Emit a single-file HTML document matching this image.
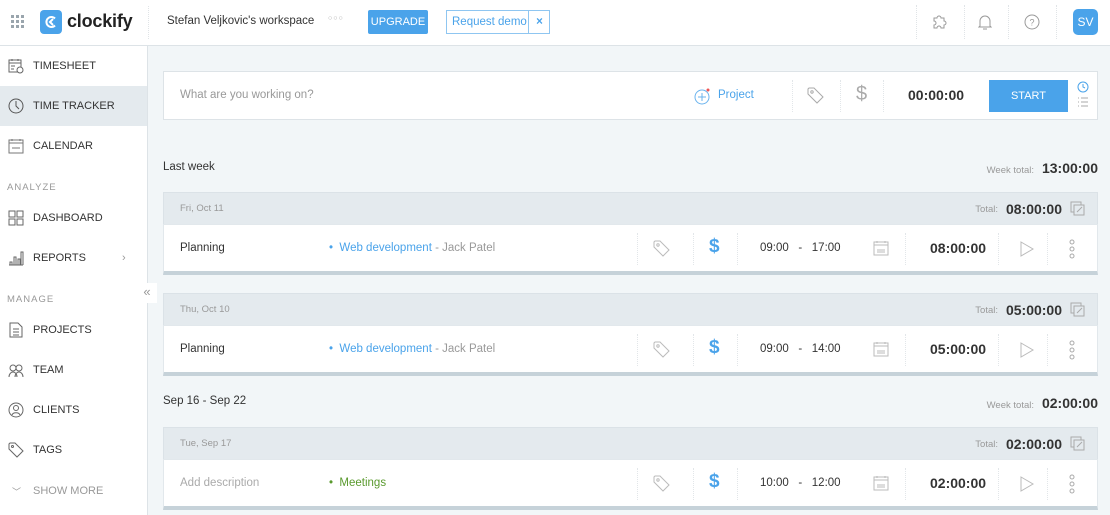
<!DOCTYPE html>
<html><head><meta charset="utf-8"><style>
*{box-sizing:border-box;margin:0;padding:0}
body{width:1110px;height:515px;overflow:hidden;font-family:"Liberation Sans",sans-serif;background:#f2f6f8;position:relative;color:#333}
.abs{position:absolute}
.top{left:0;top:0;width:1110px;height:46px;background:#fff;border-bottom:1px solid #dde3e7}
.side{left:0;top:46px;width:148px;height:469px;background:#fff;border-right:1px solid #dde3e7}
.ni{position:absolute;left:0;width:147px;height:40px;display:flex;align-items:center;font-size:11px;color:#333}
.ni svg{margin-left:8px;margin-right:9px}
.sec{position:absolute;left:7px;font-size:9.5px;color:#999;letter-spacing:1px}
.vs{position:absolute;top:0;width:0;border-left:1px dotted #e2e6e9}
.card{position:absolute;left:163px;width:935px;background:#fff}
.gh{position:absolute;left:163px;width:935px;height:33px;background:#e4eaee;border:1px solid #dbe2e7;border-bottom:none}
.row{position:absolute;left:163px;width:935px;height:51px;background:#fff;border:1px solid #e2e8ec;border-bottom:4px solid #c6d2d9}
.t{position:absolute;white-space:nowrap}
.tot{position:absolute;right:35px;top:8px;white-space:nowrap;font-size:14px;font-weight:bold}
.tl{position:absolute;right:99px;top:11px;font-size:9.5px;color:#999}
</style></head><body>
<div class="abs top">
 <svg class="abs" style="left:11px;top:15px" width="13" height="13" viewBox="0 0 13 13" fill="#9aa5ad"><g><rect x="0" y="0" width="3" height="3"/><rect x="5" y="0" width="3" height="3"/><rect x="10" y="0" width="3" height="3"/><rect x="0" y="5" width="3" height="3"/><rect x="5" y="5" width="3" height="3"/><rect x="10" y="5" width="3" height="3"/><rect x="0" y="10" width="3" height="3"/><rect x="5" y="10" width="3" height="3"/><rect x="10" y="10" width="3" height="3"/></g></svg>
 <div class="abs" style="left:40px;top:10px;width:22px;height:24px;background:#4aa3ea;border-radius:4px"></div>
 <svg class="abs" style="left:44px;top:14px" width="15" height="16" viewBox="0 0 15 16"><path d="M11 4.5A5 5 0 1 0 11 11.5" stroke="#fff" stroke-width="2" fill="none"/><path d="M9 5L6 8l3 3" stroke="#fff" stroke-width="2" fill="none"/></svg>
 <div class="t" style="left:67px;top:11px;font-size:18px;font-weight:bold;color:#222;letter-spacing:-0.2px">clockify</div>
 <div class="abs" style="left:148px;top:6px;height:33px;border-left:1px dotted #e0e4e7"></div>
 <div class="t" style="left:167px;top:15px;font-size:11.5px;color:#333">Stefan Veljkovic's workspace</div>
 <div class="t" style="left:328px;top:15px;font-size:7px;color:#aaa;letter-spacing:1px">○○○</div>
 <div class="abs" style="left:368px;top:10px;width:60px;height:24px;background:#4aa3ea;border-radius:2px;color:#fff;font-size:11px;text-align:center;line-height:24px">UPGRADE</div>
 <div class="abs" style="left:446px;top:10px;width:104px;height:24px;border:1px solid #8fc6f1;color:#4aa3ea;font-size:11.5px;line-height:22px"><span style="margin-left:5px">Request demo</span><span style="position:absolute;left:81px;top:0;height:22px;border-left:1px solid #8fc6f1;width:22px;text-align:center;font-weight:bold">×</span></div>
 <div class="abs" style="left:916px;top:5px;height:34px;border-left:1px dotted #e0e4e7"></div>
 <div class="abs" style="left:964px;top:5px;height:34px;border-left:1px dotted #e0e4e7"></div>
 <div class="abs" style="left:1008px;top:5px;height:34px;border-left:1px dotted #e0e4e7"></div>
 <div class="abs" style="left:1056px;top:5px;height:34px;border-left:1px dotted #e0e4e7"></div>
 <svg class="abs" style="left:931px;top:14px" width="16" height="16" viewBox="0 0 16 16"><path d="M3 4h3a2 2 0 1 1 4 0h3v3a2 2 0 1 1 0 4v3h-3a2 2 0 1 0-4 0H3v-3a2 2 0 1 0 0-4z" stroke="#999" fill="none"/></svg>
 <svg class="abs" style="left:978px;top:13px" width="14" height="18" viewBox="0 0 14 18"><path d="M2 13V8a5 5 0 0 1 10 0v5l1 1H1zM5 16h4" stroke="#999" fill="none"/></svg>
 <svg class="abs" style="left:1024px;top:14px" width="16" height="16" viewBox="0 0 16 16"><circle cx="8" cy="8" r="7" stroke="#999" fill="none"/><text x="8" y="11.5" font-size="9" text-anchor="middle" fill="#999" font-family="Liberation Sans">?</text></svg>
 <div class="abs" style="left:1073px;top:9px;width:25px;height:26px;background:#4aa3ea;border-radius:5px;color:#fff;font-size:12px;text-align:center;line-height:26px">SV</div>
</div>

<div class="abs side">
 <div class="ni" style="top:0"><svg width="16" height="16" viewBox="0 0 16 16" fill="none" stroke="#666"><rect x="1" y="2" width="12" height="12"/><path d="M1 5h12M4 1v2M10 1v2M3 8h4M3 11h3"/><circle cx="12" cy="12" r="3" fill="#fff"/></svg>TIMESHEET</div>
 <div class="ni" style="top:40px;background:#e4eaee"><svg width="16" height="16" viewBox="0 0 16 16" fill="none" stroke="#555"><circle cx="8" cy="8" r="7"/><path d="M8 3v5l3 3"/></svg>TIME TRACKER</div>
 <div class="ni" style="top:80px"><svg width="16" height="16" viewBox="0 0 16 16" fill="none" stroke="#777"><rect x="1" y="2" width="14" height="13"/><path d="M1 5h14M4 1v2M12 1v2M4 10h8"/></svg>CALENDAR</div>
 <div class="sec" style="top:136px">ANALYZE</div>
 <div class="ni" style="top:152px"><svg width="16" height="16" viewBox="0 0 16 16" fill="none" stroke="#666"><rect x="1" y="1" width="6" height="6"/><rect x="9" y="1" width="6" height="6"/><rect x="1" y="9" width="6" height="6"/><rect x="9" y="9" width="6" height="6"/></svg>DASHBOARD</div>
 <div class="ni" style="top:192px"><svg width="16" height="16" viewBox="0 0 16 16" fill="none" stroke="#666"><path d="M1 15h14M2 15v-3h2v3M6 15V7h2v8M10 15V9h2v6M13 15V2h2v13"/></svg>REPORTS<span style="position:absolute;left:122px;color:#999">›</span></div>
 <div class="sec" style="top:248px">MANAGE</div>
 <div class="abs" style="left:137px;top:237px;width:20px;height:20px;background:#fff;color:#999;font-size:13px;text-align:center;line-height:18px">«</div>
 <div class="ni" style="top:264px"><svg width="16" height="16" viewBox="0 0 16 16" fill="none" stroke="#666"><path d="M2 1h8l4 4v10H2zM5 7h6M5 10h6M5 13h6"/></svg>PROJECTS</div>
 <div class="ni" style="top:304px"><svg width="16" height="16" viewBox="0 0 16 16" fill="none" stroke="#666"><circle cx="5" cy="6" r="3"/><circle cx="11" cy="6" r="3"/><path d="M1 15c0-3 2-5 4-5s4 2 4 5M7 15c0-3 2-5 4-5s4 2 4 5"/></svg>TEAM</div>
 <div class="ni" style="top:344px"><svg width="16" height="16" viewBox="0 0 16 16" fill="none" stroke="#666"><circle cx="8" cy="8" r="7"/><circle cx="8" cy="6" r="2.5"/><path d="M4 13c1-3 7-3 8 0"/></svg>CLIENTS</div>
 <div class="ni" style="top:384px"><svg width="16" height="16" viewBox="0 0 16 16" fill="none" stroke="#666"><path d="M1 2v5l8 8 6-6-8-8H2z"/><circle cx="4.5" cy="4.5" r="1"/></svg>TAGS</div>
 <div class="ni" style="top:425px;color:#999"><span style="margin-left:12px;margin-right:12px;font-size:9px">﹀</span>SHOW MORE</div>
</div>

<div class="card" style="top:71px;height:49px;border:1px solid #dde3e7">
 <div class="t" style="left:16px;top:17px;font-size:11.5px;color:#999">What are you working on?</div>
 <svg class="abs" style="left:530px;top:15px" width="18" height="18" viewBox="0 0 18 18" fill="none" stroke="#6ab3ee"><circle cx="8" cy="10" r="7"/><path d="M8 6v8M4 10h8"/><circle cx="14" cy="3" r="1.5" fill="#e55" stroke="none"/></svg>
 <div class="t" style="left:554px;top:17px;font-size:11.5px;color:#4aa3ea">Project</div>
 <div class="vs" style="left:628px;top:8px;height:32px"></div>
 <svg class="abs" style="left:643px;top:15px" width="18" height="18" viewBox="0 0 18 18" fill="none" stroke="#aaa"><path d="M1 2v5l9 9 6-6-9-9H2z"/><circle cx="5" cy="5" r="1.2"/></svg>
 <div class="vs" style="left:676px;top:8px;height:32px"></div>
 <div class="t" style="left:692px;top:11px;font-size:20px;color:#aaa;font-weight:300">$</div>
 <div class="vs" style="left:719px;top:8px;height:32px"></div>
 <div class="t" style="left:744px;top:15px;font-size:14px;font-weight:bold;color:#333">00:00:00</div>
 <div class="abs" style="left:825px;top:8px;width:79px;height:32px;background:#4aa3ea;color:#fff;font-size:11px;text-align:center;line-height:32px">START</div>
 <svg class="abs" style="left:913px;top:9px" width="12" height="28" viewBox="0 0 12 28" fill="none"><circle cx="6" cy="6" r="5" stroke="#4aa3ea"/><path d="M6 3v3l2 1" stroke="#4aa3ea"/><path d="M1 17h1M4 17h7M1 21h1M4 21h7M1 25h1M4 25h7" stroke="#aaa"/></svg>
</div>

<div class="t" style="left:163px;top:161px;font-size:11.5px;color:#333">Last week</div>
<div class="t" style="right:76px;top:165px;font-size:9.5px;color:#999">Week total:</div>
<div class="t" style="right:12px;top:160px;font-size:14px;font-weight:bold;color:#333">13:00:00</div>

<div class="t" style="left:163px;top:395px;font-size:11.5px;color:#333">Sep 16 - Sep 22</div>
<div class="t" style="right:76px;top:400px;font-size:9.5px;color:#999">Week total:</div>
<div class="t" style="right:12px;top:395px;font-size:14px;font-weight:bold;color:#333">02:00:00</div>

<div class="gh" style="top:192px"><div class="t" style="left:16px;top:10px;font-size:9.5px;color:#999">Fri, Oct 11</div><div class="tl">Total:</div><div class="tot">08:00:00</div><svg class="abs" style="left:906px;top:8px" width="16" height="16" viewBox="0 0 16 16" fill="none" stroke="#aaa"><rect x="1" y="1" width="10" height="10"/><rect x="4" y="4" width="10" height="10" fill="#e4eaee"/><path d="M7 11l5-5"/></svg></div>
<div class="gh" style="top:293px"><div class="t" style="left:16px;top:10px;font-size:9.5px;color:#999">Thu, Oct 10</div><div class="tl">Total:</div><div class="tot">05:00:00</div><svg class="abs" style="left:906px;top:8px" width="16" height="16" viewBox="0 0 16 16" fill="none" stroke="#aaa"><rect x="1" y="1" width="10" height="10"/><rect x="4" y="4" width="10" height="10" fill="#e4eaee"/><path d="M7 11l5-5"/></svg></div>
<div class="gh" style="top:427px"><div class="t" style="left:16px;top:10px;font-size:9.5px;color:#999">Tue, Sep 17</div><div class="tl">Total:</div><div class="tot">02:00:00</div><svg class="abs" style="left:906px;top:8px" width="16" height="16" viewBox="0 0 16 16" fill="none" stroke="#aaa"><rect x="1" y="1" width="10" height="10"/><rect x="4" y="4" width="10" height="10" fill="#e4eaee"/><path d="M7 11l5-5"/></svg></div>

<div class="row" style="top:224px">
 <div class="t" style="left:16px;top:17px;font-size:11.5px">Planning</div>
 <div class="t" style="left:165px;top:17px;font-size:11.5px;color:#4aa3ea">•&nbsp; Web development <span style="color:#999">- Jack Patel</span></div>
 <div class="vs" style="left:473px;top:8px;height:32px"></div>
 <svg class="abs" style="left:489px;top:15px" width="18" height="18" viewBox="0 0 18 18" fill="none" stroke="#bbb"><path d="M1 2v5l9 9 6-6-9-9H2z"/><circle cx="5" cy="5" r="1.2"/></svg>
 <div class="vs" style="left:529px;top:8px;height:32px"></div>
 <div class="t" style="left:545px;top:11px;font-size:19px;color:#4aa3ea;font-weight:bold">$</div>
 <div class="vs" style="left:573px;top:8px;height:32px"></div>
 <div class="t" style="left:596px;top:17px;font-size:11.5px">09:00 &nbsp;&nbsp;- &nbsp;&nbsp;17:00</div>
 <svg class="abs" style="left:709px;top:15px" width="16" height="16" viewBox="0 0 16 16" fill="none" stroke="#bbb"><rect x="1" y="2" width="14" height="13"/><path d="M1 5h14M4 1v2M12 1v2M4 10h8M4 12h8"/></svg>
 <div class="vs" style="left:741px;top:8px;height:32px"></div>
 <div class="t" style="left:766px;top:15px;font-size:14px;font-weight:bold">08:00:00</div>
 <div class="vs" style="left:834px;top:8px;height:32px"></div>
 <svg class="abs" style="left:856px;top:16px" width="14" height="16" viewBox="0 0 14 16" fill="none" stroke="#bbb"><path d="M1 1l12 7-12 7z"/></svg>
 <div class="vs" style="left:883px;top:8px;height:32px"></div>
 <svg class="abs" style="left:905px;top:14px" width="6" height="20" viewBox="0 0 6 20" fill="none" stroke="#aaa"><circle cx="3" cy="3" r="2"/><circle cx="3" cy="10" r="2"/><circle cx="3" cy="17" r="2"/></svg>
</div>
<div class="row" style="top:325px">
 <div class="t" style="left:16px;top:17px;font-size:11.5px">Planning</div>
 <div class="t" style="left:165px;top:17px;font-size:11.5px;color:#4aa3ea">•&nbsp; Web development <span style="color:#999">- Jack Patel</span></div>
 <div class="vs" style="left:473px;top:8px;height:32px"></div>
 <svg class="abs" style="left:489px;top:15px" width="18" height="18" viewBox="0 0 18 18" fill="none" stroke="#bbb"><path d="M1 2v5l9 9 6-6-9-9H2z"/><circle cx="5" cy="5" r="1.2"/></svg>
 <div class="vs" style="left:529px;top:8px;height:32px"></div>
 <div class="t" style="left:545px;top:11px;font-size:19px;color:#4aa3ea;font-weight:bold">$</div>
 <div class="vs" style="left:573px;top:8px;height:32px"></div>
 <div class="t" style="left:596px;top:17px;font-size:11.5px">09:00 &nbsp;&nbsp;- &nbsp;&nbsp;14:00</div>
 <svg class="abs" style="left:709px;top:15px" width="16" height="16" viewBox="0 0 16 16" fill="none" stroke="#bbb"><rect x="1" y="2" width="14" height="13"/><path d="M1 5h14M4 1v2M12 1v2M4 10h8M4 12h8"/></svg>
 <div class="vs" style="left:741px;top:8px;height:32px"></div>
 <div class="t" style="left:766px;top:15px;font-size:14px;font-weight:bold">05:00:00</div>
 <div class="vs" style="left:834px;top:8px;height:32px"></div>
 <svg class="abs" style="left:856px;top:16px" width="14" height="16" viewBox="0 0 14 16" fill="none" stroke="#bbb"><path d="M1 1l12 7-12 7z"/></svg>
 <div class="vs" style="left:883px;top:8px;height:32px"></div>
 <svg class="abs" style="left:905px;top:14px" width="6" height="20" viewBox="0 0 6 20" fill="none" stroke="#aaa"><circle cx="3" cy="3" r="2"/><circle cx="3" cy="10" r="2"/><circle cx="3" cy="17" r="2"/></svg>
</div>
<div class="row" style="top:459px">
 <div class="t" style="left:16px;top:17px;font-size:11.5px;color:#aaa">Add description</div>
 <div class="t" style="left:165px;top:17px;font-size:11.5px;color:#5a9a2e">•&nbsp; Meetings</div>
 <div class="vs" style="left:473px;top:8px;height:32px"></div>
 <svg class="abs" style="left:489px;top:15px" width="18" height="18" viewBox="0 0 18 18" fill="none" stroke="#bbb"><path d="M1 2v5l9 9 6-6-9-9H2z"/><circle cx="5" cy="5" r="1.2"/></svg>
 <div class="vs" style="left:529px;top:8px;height:32px"></div>
 <div class="t" style="left:545px;top:11px;font-size:19px;color:#4aa3ea;font-weight:bold">$</div>
 <div class="vs" style="left:573px;top:8px;height:32px"></div>
 <div class="t" style="left:596px;top:17px;font-size:11.5px">10:00 &nbsp;&nbsp;- &nbsp;&nbsp;12:00</div>
 <svg class="abs" style="left:709px;top:15px" width="16" height="16" viewBox="0 0 16 16" fill="none" stroke="#bbb"><rect x="1" y="2" width="14" height="13"/><path d="M1 5h14M4 1v2M12 1v2M4 10h8M4 12h8"/></svg>
 <div class="vs" style="left:741px;top:8px;height:32px"></div>
 <div class="t" style="left:766px;top:15px;font-size:14px;font-weight:bold">02:00:00</div>
 <div class="vs" style="left:834px;top:8px;height:32px"></div>
 <svg class="abs" style="left:856px;top:16px" width="14" height="16" viewBox="0 0 14 16" fill="none" stroke="#bbb"><path d="M1 1l12 7-12 7z"/></svg>
 <div class="vs" style="left:883px;top:8px;height:32px"></div>
 <svg class="abs" style="left:905px;top:14px" width="6" height="20" viewBox="0 0 6 20" fill="none" stroke="#aaa"><circle cx="3" cy="3" r="2"/><circle cx="3" cy="10" r="2"/><circle cx="3" cy="17" r="2"/></svg>
</div>
</body></html>
